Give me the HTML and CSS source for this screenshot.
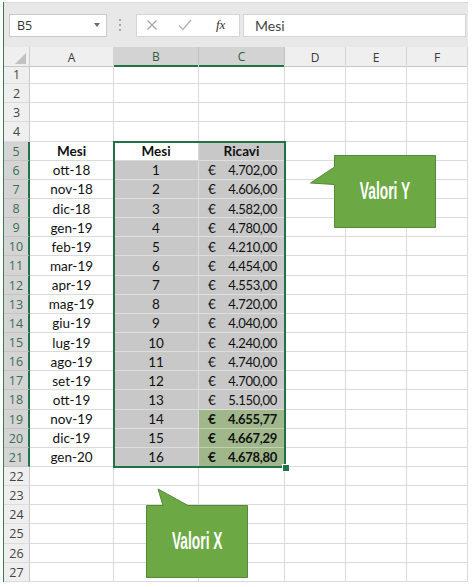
FILE: index.html
```html
<!DOCTYPE html>
<html lang="it">
<head>
<meta charset="utf-8">
<title>Foglio</title>
<link rel="stylesheet" href="styles.css">
</head>
<body>
<div class="frame">
  <div class="toolbar">
    <div class="namebox"><span>B5</span><span class="drop"></span></div>
    <div class="dots"><i></i><i></i><i></i></div>
    <div class="fxbox">
      <svg class="ico-x" width="12" height="12" viewBox="0 0 12 12"><path d="M1.5 1.5 L10.5 10.5 M10.5 1.5 L1.5 10.5" stroke="#a3a3a3" stroke-width="1.2" fill="none"/></svg>
      <svg class="ico-ok" width="14" height="12" viewBox="0 0 14 12"><path d="M1 6.5 L5 10.5 L13 1" stroke="#b3b3b3" stroke-width="1.3" fill="none"/></svg>
      <span class="fx">fx</span>
    </div>
    <div class="formula">Mesi</div>
  </div>
  <div class="sheet">
    <div class="row hdr"><div class="corner"><span class="tri"></span></div><div class="ch">A</div><div class="ch on">B</div><div class="ch on">C</div><div class="ch">D</div><div class="ch">E</div><div class="ch">F</div></div>
    <div class="row"><div class="rh">1</div><div></div><div></div><div></div><div></div><div></div><div></div></div>
    <div class="row"><div class="rh">2</div><div></div><div></div><div></div><div></div><div></div><div></div></div>
    <div class="row"><div class="rh">3</div><div></div><div></div><div></div><div></div><div></div><div></div></div>
    <div class="row"><div class="rh">4</div><div></div><div></div><div></div><div></div><div></div><div></div></div>
    <div class="row"><div class="rh on">5</div><div class="b">Mesi</div><div class="b">Mesi</div><div class="b g">Ricavi</div><div></div><div></div><div></div></div>
    <div class="row"><div class="rh on">6</div><div>ott-18</div><div class="g">1</div><div class="g eur"><span>€</span><span class="num">4.702,00</span></div><div></div><div></div><div></div></div>
    <div class="row"><div class="rh on">7</div><div>nov-18</div><div class="g">2</div><div class="g eur"><span>€</span><span class="num">4.606,00</span></div><div></div><div></div><div></div></div>
    <div class="row"><div class="rh on">8</div><div>dic-18</div><div class="g">3</div><div class="g eur"><span>€</span><span class="num">4.582,00</span></div><div></div><div></div><div></div></div>
    <div class="row"><div class="rh on">9</div><div>gen-19</div><div class="g">4</div><div class="g eur"><span>€</span><span class="num">4.780,00</span></div><div></div><div></div><div></div></div>
    <div class="row"><div class="rh on">10</div><div>feb-19</div><div class="g">5</div><div class="g eur"><span>€</span><span class="num">4.210,00</span></div><div></div><div></div><div></div></div>
    <div class="row"><div class="rh on">11</div><div>mar-19</div><div class="g">6</div><div class="g eur"><span>€</span><span class="num">4.454,00</span></div><div></div><div></div><div></div></div>
    <div class="row"><div class="rh on">12</div><div>apr-19</div><div class="g">7</div><div class="g eur"><span>€</span><span class="num">4.553,00</span></div><div></div><div></div><div></div></div>
    <div class="row"><div class="rh on">13</div><div>mag-19</div><div class="g">8</div><div class="g eur"><span>€</span><span class="num">4.720,00</span></div><div></div><div></div><div></div></div>
    <div class="row"><div class="rh on">14</div><div>giu-19</div><div class="g">9</div><div class="g eur"><span>€</span><span class="num">4.040,00</span></div><div></div><div></div><div></div></div>
    <div class="row"><div class="rh on">15</div><div>lug-19</div><div class="g">10</div><div class="g eur"><span>€</span><span class="num">4.240,00</span></div><div></div><div></div><div></div></div>
    <div class="row"><div class="rh on">16</div><div>ago-19</div><div class="g">11</div><div class="g eur"><span>€</span><span class="num">4.740,00</span></div><div></div><div></div><div></div></div>
    <div class="row"><div class="rh on">17</div><div>set-19</div><div class="g">12</div><div class="g eur"><span>€</span><span class="num">4.700,00</span></div><div></div><div></div><div></div></div>
    <div class="row"><div class="rh on">18</div><div>ott-19</div><div class="g">13</div><div class="g eur"><span>€</span><span class="num">5.150,00</span></div><div></div><div></div><div></div></div>
    <div class="row"><div class="rh on">19</div><div>nov-19</div><div class="g">14</div><div class="gr eur b"><span>€</span><span class="num">4.655,77</span></div><div></div><div></div><div></div></div>
    <div class="row"><div class="rh on">20</div><div>dic-19</div><div class="g">15</div><div class="gr eur b"><span>€</span><span class="num">4.667,29</span></div><div></div><div></div><div></div></div>
    <div class="row"><div class="rh on">21</div><div>gen-20</div><div class="g">16</div><div class="gr eur b"><span>€</span><span class="num">4.678,80</span></div><div></div><div></div><div></div></div>
    <div class="row"><div class="rh">22</div><div></div><div></div><div></div><div></div><div></div><div></div></div>
    <div class="row"><div class="rh">23</div><div></div><div></div><div></div><div></div><div></div><div></div></div>
    <div class="row"><div class="rh">24</div><div></div><div></div><div></div><div></div><div></div><div></div></div>
    <div class="row"><div class="rh">25</div><div></div><div></div><div></div><div></div><div></div><div></div></div>
    <div class="row"><div class="rh">26</div><div></div><div></div><div></div><div></div><div></div><div></div></div>
    <div class="row"><div class="rh">27</div><div></div><div></div><div></div><div></div><div></div><div></div></div>
    <div class="selbox"></div>
    <div class="handle"></div>
  </div>
</div>

<div class="callout cy">
  <svg class="shape" width="130" height="77" viewBox="308 153 130 77"><polygon points="334.5,155.5 435.5,155.5 435.5,227.5 334.5,227.5 334.5,184.5 310.5,183 334.5,167" fill="#6ca944" stroke="#55893a" stroke-width="1"/></svg>
  <div class="label"><span>Valori Y</span></div>
</div>
<div class="callout cx">
  <svg class="shape" width="106" height="93" viewBox="144 487 106 93"><polygon points="146.5,505.5 163,505.5 158,489 188,505.5 247.5,505.5 247.5,577.5 146.5,577.5" fill="#6ca944" stroke="#55893a" stroke-width="1"/></svg>
  <div class="label"><span>Valori X</span></div>
</div>
</body>
</html>
```
FILE: styles.css
```css
* { box-sizing: border-box; }
body {
  margin: 0;
  background: #ffffff;
  font-family: Lato, "Liberation Sans", sans-serif;
}
.frame {
  position: relative;
  margin: 2px 0 0 3px;
  width: 465px;
  border-left: 1px solid #3d7a50;
}
.toolbar {
  height: 45px;
  background: #e8e8e8;
  border-top: 1px solid #dcdcdc;
  display: flex;
  align-items: center;
  padding-left: 5px;
}
.namebox {
  width: 98px;
  height: 23px;
  background: #fff;
  border: 1px solid #c9c9c9;
  display: flex;
  align-items: center;
  justify-content: space-between;
  padding: 0 6px 0 7px;
  font-family: "Open Sans", sans-serif;
  font-size: 12.5px;
  color: #333;
}
.drop {
  width: 0; height: 0;
  border-left: 3.5px solid transparent;
  border-right: 3.5px solid transparent;
  border-top: 4px solid #6a6a6a;
}
.dots {
  margin-left: 12px;
  width: 3px;
  display: flex;
  flex-direction: column;
  gap: 3px;
}
.dots i {
  display: block;
  width: 2px; height: 2px;
  background: #a8a8a8;
}
.fxbox {
  margin-left: 14px;
  width: 104px;
  height: 23px;
  background: #fff;
  border: 1px solid #d4d4d4;
  display: flex;
  align-items: center;
  padding-left: 9px;
}
.ico-ok { margin-left: 20px; }
.fx {
  margin-left: 24px;
  font-family: "Liberation Serif", serif;
  font-style: italic;
  font-size: 13px;
  color: #333;
}
.formula {
  margin-left: 3px;
  width: 223px;
  height: 23px;
  background: #fff;
  border: 1px solid #d4d4d4;
  display: flex;
  align-items: center;
  padding-left: 11px;
  font-size: 14px;
  color: #444;
}
.sheet { position: relative; }
.row {
  display: grid;
  grid-template-columns: 26px 84px 85px 86px 61px 61px 61px;
  height: 19.15px;
}
.row.hdr { height: 18px; }
.row > div {
  border-right: 1px solid #dadada;
  border-bottom: 1px solid #dadada;
  display: flex;
  align-items: center;
  justify-content: center;
  padding-top: 1px;
  font-size: 13.5px;
  color: #111;
  white-space: nowrap;
}
.row > .corner {
  background: #efefef;
  border-right: 1px solid #cfcfcf;
  border-bottom: 1px solid #c6c6c6;
  position: relative;
}
.tri {
  position: absolute;
  right: 3px;
  bottom: 2px;
  width: 0; height: 0;
  border-left: 11px solid transparent;
  border-bottom: 11px solid #c2c2c2;
}
.row > .ch {
  background: #efefef;
  border-right: 1px solid #d3d3d3;
  border-bottom: 1px solid #c6c6c6;
  font-family: "Open Sans", sans-serif;
  font-size: 12px;
  color: #3a3a3a;
}
.row > .ch.on {
  background: #d3d3d3;
  border-right-color: #c0c0c0;
  border-bottom: 2px solid #217346;
  color: #2e5e40;
}
.row > .rh {
  background: #efefef;
  border-right: 1px solid #c8c8c8;
  border-bottom: 1px solid #dcdcdc;
  font-family: "Open Sans", sans-serif;
  font-size: 12.5px;
  color: #444;
}
.row > .rh.on {
  background: #d4d4d4;
  border-right: 2px solid #217346;
  border-bottom-color: #c4c4c4;
  color: #3d6e50;
}
.row > .b { font-weight: 700; }
.row > .g {
  background: #c8c8c8;
  border-bottom-color: #dedede;
  border-right-color: #dedede;
}
.row > .gr {
  background: #a0b78b;
  border-bottom-color: #c2d0b6;
  border-right-color: #dedede;
}
.row > .eur {
  justify-content: space-between;
  padding: 1px 7px 0 9px;
}
.num {
  font-size: 13px;
  letter-spacing: -0.3px;
}
.selbox {
  position: absolute;
  left: 109px;
  top: 93.6px;
  width: 173px;
  height: 327.6px;
  border: 2px solid #217346;
  pointer-events: none;
}
.handle {
  position: absolute;
  left: 279px;
  top: 417.6px;
  width: 6px;
  height: 6px;
  background: #217346;
  outline: 1px solid #ffffff;
}
.callout {
  position: absolute;
  display: flex;
}
.callout .shape {
  position: absolute;
  left: 0;
  top: 0;
}
.cy { left: 308px; top: 153px; width: 130px; height: 77px; }
.cx { left: 144px; top: 487px; width: 106px; height: 93px; }
.label {
  position: relative;
  display: flex;
  align-items: center;
  justify-content: center;
  color: #ffffff;
  font-family: "Liberation Sans", sans-serif;
  font-weight: 700;
  font-size: 23px;
}
.label span {
  display: inline-block;
  transform: scaleX(0.6);
  white-space: nowrap;
}
.cy .label { margin: 2px 0 0 26px; width: 102px; height: 73px; }
.cx .label { margin: 18px 0 0 2px; width: 102px; height: 73px; }
```
